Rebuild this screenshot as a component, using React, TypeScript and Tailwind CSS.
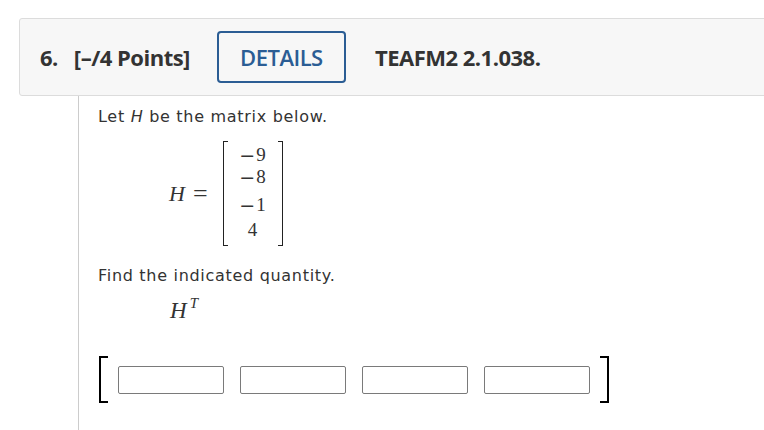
import React from "react";

function Bracket({ side }: { side: "l" | "r" }) {
  return (
    <div
      className={
        side === "l"
          ? "w-[9px] h-[47px] border-l-2 border-t-2 border-b-2 border-black"
          : "w-[9px] h-[47px] border-r-2 border-t-2 border-b-2 border-black"
      }
    />
  );
}

function Input() {
  return <div className="w-[106px] h-[28px] border border-[#7a7a7a] rounded-[2px] bg-white" />;
}

function Entry({ neg, d, cls }: { neg?: boolean; d: string; cls?: string }) {
  return (
    <div className={`flex items-center ${cls ?? ""}`}>
      {neg && (
        <span className="mr-[1px]" style={{ fontFamily: '"DejaVu Serif", serif', fontWeight: 300 }}>
          −
        </span>
      )}
      <span>{d}</span>
    </div>
  );
}

export default function App() {
  const head = { fontFamily: '"Open Sans", sans-serif' };
  const body = { fontFamily: '"DejaVu Sans", Verdana, sans-serif' };
  const math = { fontFamily: '"Liberation Serif", "Times New Roman", serif' };
  return (
    <div className="w-[764px] h-[430px] overflow-hidden bg-white pt-[18px] pl-[19px]">
      <div
        className="h-[78px] w-[760px] bg-[#f7f7f7] border border-[#dcdcdc] rounded-[3px] flex items-center pl-[20px] text-[#333333]"
        style={head}
      >
        <span className="text-[22px] font-bold tracking-[-0.5px]">6.</span>
        <span className="ml-[16px] text-[22px] font-bold tracking-[-0.5px]">[–/4 Points]</span>
        <div className="ml-[27px] w-[129px] h-[52px] border-2 border-[#2b5d94] rounded-[4px] flex items-center justify-center text-[#2b5d94] text-[22px] font-semibold tracking-[-0.5px]">
          DETAILS
        </div>
        <span className="ml-[29px] text-[22px] font-bold tracking-[-0.5px]">TEAFM2 2.1.038.</span>
      </div>
      <div className="ml-[59px] h-[340px] border-l border-[#cccccc] pl-[19px] pt-[10px] text-[#333333]" style={body}>
        <div className="text-[16px] leading-[22px] tracking-[0.7px]">
          Let <span className="italic">H</span> be the matrix below.
        </div>
        <div className="mt-[13px] ml-[71px] flex items-center" style={math}>
          <span className="italic text-[22px]">H</span>
          <span className="ml-[8px] text-[26px] leading-[26px]">=</span>
          <div className="ml-[15px] flex">
            <div className="w-[5px] h-[105px] border-l border-t border-b border-[#222]" />
            <div className="w-[50px] flex flex-col items-center pt-[4px] text-[19px] leading-[20px]">
              <Entry neg d="9" />
              <Entry neg d="8" cls="mt-[2px]" />
              <Entry neg d="1" cls="mt-[8px]" />
              <Entry d="4" cls="mt-[5px]" />
            </div>
            <div className="w-[5px] h-[105px] border-r border-t border-b border-[#222]" />
          </div>
        </div>
        <div className="mt-[19px] text-[16px] leading-[22px] tracking-[0.7px]">Find the indicated quantity.</div>
        <div className="mt-[12px] ml-[72px] text-[23px] leading-[24px] flex items-start" style={math}>
          <span className="italic">H</span>
          <span className="italic text-[15px] leading-[15px] ml-[3px] relative top-[-3px]">T</span>
        </div>
        <div className="mt-[33px] ml-[1px] flex items-center">
          <Bracket side="l" />
          <div className="ml-[10px] flex gap-[16px]">
            <Input />
            <Input />
            <Input />
            <Input />
          </div>
          <div className="ml-[10px]">
            <Bracket side="r" />
          </div>
        </div>
      </div>
    </div>
  );
}
